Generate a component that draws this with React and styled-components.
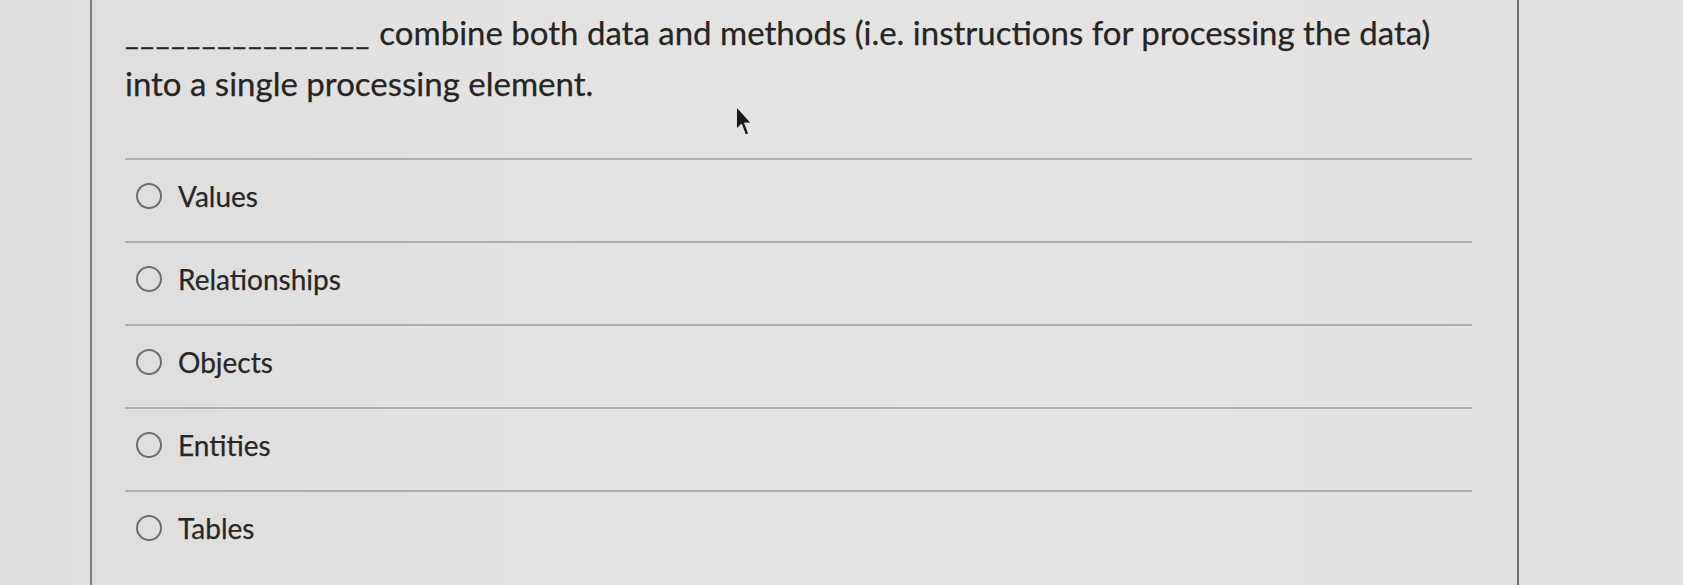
import React from "react";
import styled, { createGlobalStyle } from "styled-components";

const options = ["Values", "Relationships", "Objects", "Entities", "Tables"];

const App = () => {
  return (
    <>
      <GlobalStyle />
      <Page>
        <Gutter />
        <Panel>
          <Question>
            <Blank>________________</Blank> combine both data and methods (i.e.
            instructions for processing the data)
            <br />
            into a single processing element.
          </Question>
          <OptionList>
            {options.map((label) => (
              <Option key={label}>
                <Radio />
                <Label>{label}</Label>
              </Option>
            ))}
          </OptionList>
        </Panel>
        <Cursor viewBox="0 0 18 32" width="18" height="32">
          <path
            d="M1.5 1 L1.5 23 L6.5 18 L10.5 29 L13.5 27.5 L9.5 17 L16 17 Z"
            fill="#1a1a1a"
            stroke="#f4f4f4"
            strokeWidth="0.8"
            strokeLinejoin="round"
          />
        </Cursor>
      </Page>
    </>
  );
};

export default App;

const GlobalStyle = createGlobalStyle`
  body {
    margin: 0;
    background: #e3e2e0;
    font-family: Lato, "Open Sans", sans-serif;
    color: #2c2c2c;
  }
`;

const Page = styled.div`
  position: relative;
  display: flex;
  height: 585px;
  overflow: hidden;
  background: linear-gradient(90deg, #dddcda 0%, #e4e3e1 30%, #e5e4e2 70%, #e1e0de 100%);
`;

const Gutter = styled.div`
  width: 92px;
  flex-shrink: 0;
  box-sizing: border-box;
  border-right: 2px solid #7c7c7c;
`;

const Panel = styled.div`
  width: 1427px;
  flex-shrink: 0;
  box-sizing: border-box;
  padding: 7px 45px 0 33px;
  border-right: 2px solid #6f6f6f;
`;

const Question = styled.div`
  font-size: 33px;
  line-height: 50px;
  color: #252525;
  -webkit-text-stroke: 0.25px #252525;
`;

const Blank = styled.span`
  font-size: 30px;
  letter-spacing: 1.6px;
`;

const OptionList = styled.div`
  margin-top: 50px;
  display: flex;
  flex-direction: column;
`;

const Option = styled.div`
  display: flex;
  align-items: center;
  gap: 16px;
  height: 83px;
  padding: 0 0 9px 11px;
  box-sizing: border-box;
  border-top: 2px solid #b0afad;
`;

const Radio = styled.span`
  width: 22px;
  height: 22px;
  border: 2px solid #6e6e6e;
  border-radius: 50%;
  flex-shrink: 0;
`;

const Label = styled.span`
  font-size: 28px;
  color: #272727;
  -webkit-text-stroke: 0.25px #272727;
`;

const Cursor = styled.svg`
  position: absolute;
  left: 735px;
  top: 106px;
`;
